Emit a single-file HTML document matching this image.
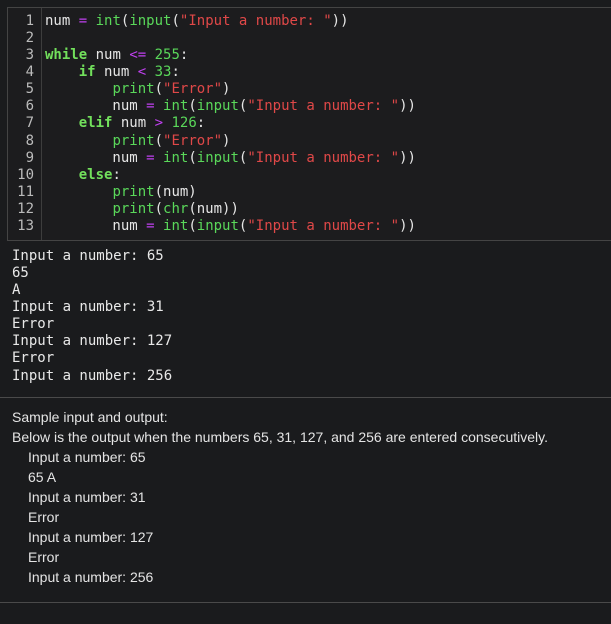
<!DOCTYPE html>
<html><head><style>
html,body{margin:0;padding:0;background:#1a1b1d;width:611px;height:624px;overflow:hidden}
.code{position:absolute;left:7px;top:7px;width:604px;height:234px;border:1px solid #444;border-right:none;background:#1c1c1e;box-sizing:border-box}
.gut{position:absolute;left:0;top:0;width:33px;height:100%;border-right:1px solid #3d3d3d}
pre{margin:0;font-family:"DejaVu Sans Mono","Liberation Mono",monospace;font-size:14px;line-height:17.08px;color:#e6e6e6}
.ln{position:absolute;left:0;top:5px;width:26px;text-align:right;color:#bbb}
.src{position:absolute;left:37px;top:5px}
.k{color:#72e05c;font-weight:bold}.f{color:#5ad85a}.s{color:#e04848}.o{color:#c040f0}.n{color:#5ad85a}
.out{position:absolute;left:12px;top:248px;color:#e8e8e8}
.hr{position:absolute;left:0;width:611px;height:1px;background:#4a4a4a}
.sam{position:absolute;left:12px;top:407px;font-family:"Liberation Sans",sans-serif;font-size:14px;line-height:20px;color:#e4e4e4;letter-spacing:0}
.sam div.i{padding-left:16px}
</style></head><body>
<div class="code"><div class="gut"></div>
<pre class="ln">1
2
3
4
5
6
7
8
9
10
11
12
13</pre>
<pre class="src">num <span class="o">=</span> <span class="f">int</span>(<span class="f">input</span>(<span class="s">"Input a number: "</span>))

<span class="k">while</span> num <span class="o">&lt;=</span> <span class="n">255</span>:
    <span class="k">if</span> num <span class="o">&lt;</span> <span class="n">33</span>:
        <span class="f">print</span>(<span class="s">"Error"</span>)
        num <span class="o">=</span> <span class="f">int</span>(<span class="f">input</span>(<span class="s">"Input a number: "</span>))
    <span class="k">elif</span> num <span class="o">&gt;</span> <span class="n">126</span>:
        <span class="f">print</span>(<span class="s">"Error"</span>)
        num <span class="o">=</span> <span class="f">int</span>(<span class="f">input</span>(<span class="s">"Input a number: "</span>))
    <span class="k">else</span>:
        <span class="f">print</span>(num)
        <span class="f">print</span>(<span class="f">chr</span>(num))
        num <span class="o">=</span> <span class="f">int</span>(<span class="f">input</span>(<span class="s">"Input a number: "</span>))</pre>
</div>
<pre class="out">Input a number: 65
65
A
Input a number: 31
Error
Input a number: 127
Error
Input a number: 256</pre>
<div class="hr" style="top:397px"></div>
<div class="sam">
<div>Sample input and output:</div>
<div>Below is the output when the numbers 65, 31, 127, and 256 are entered consecutively.</div>
<div class="i">Input a number: 65</div>
<div class="i">65 A</div>
<div class="i">Input a number: 31</div>
<div class="i">Error</div>
<div class="i">Input a number: 127</div>
<div class="i">Error</div>
<div class="i">Input a number: 256</div>
</div>
<div class="hr" style="top:602px"></div>
</body></html>
